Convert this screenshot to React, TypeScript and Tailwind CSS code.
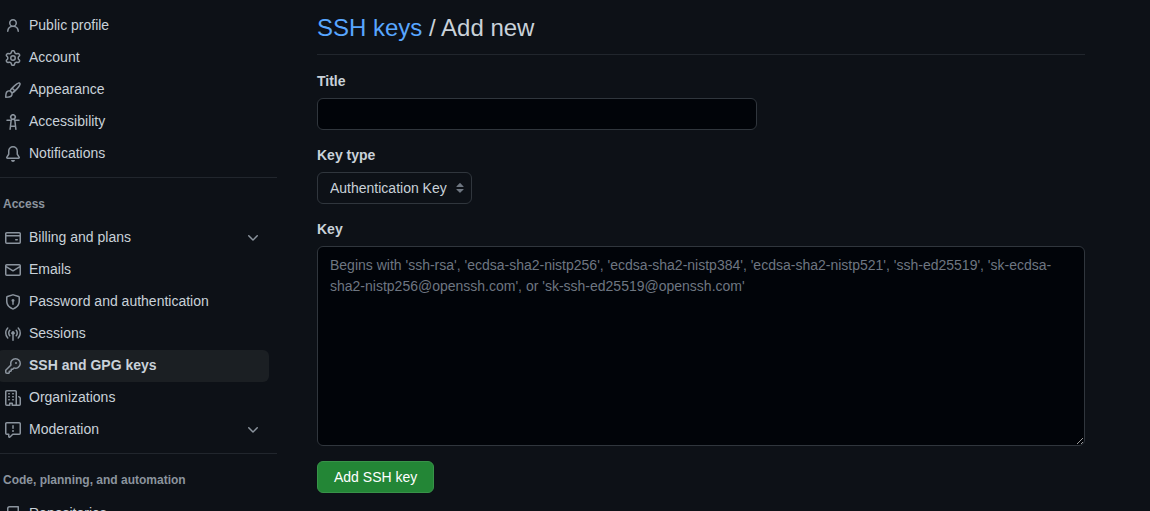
import type { ReactNode } from "react";

const icons = {
    person: "M10.561 8.073a6.005 6.005 0 0 1 3.432 5.142.75.75 0 1 1-1.498.07 4.5 4.5 0 0 0-8.99 0 .75.75 0 0 1-1.498-.07 6.004 6.004 0 0 1 3.431-5.142 3.999 3.999 0 1 1 5.123 0ZM10.5 5a2.5 2.5 0 1 0-5 0 2.5 2.5 0 0 0 5 0Z",
    gear: "M8 0a8.2 8.2 0 0 1 .701.031C9.444.095 9.99.645 10.16 1.29l.288 1.107c.018.066.079.158.212.224.231.114.454.243.668.386.123.082.233.09.299.071l1.103-.303c.644-.176 1.392.021 1.82.63.27.385.506.792.704 1.218.315.675.111 1.422-.364 1.891l-.814.806c-.049.048-.098.147-.088.294.016.257.016.515 0 .772-.01.147.038.246.088.294l.814.806c.475.469.679 1.216.364 1.891a7.977 7.977 0 0 1-.704 1.217c-.428.61-1.176.807-1.82.63l-1.102-.302c-.067-.019-.177-.011-.3.071a5.909 5.909 0 0 1-.668.386c-.133.066-.194.158-.211.224l-.29 1.106c-.168.646-.715 1.196-1.458 1.26a8.006 8.006 0 0 1-1.402 0c-.743-.064-1.289-.614-1.458-1.26l-.289-1.106c-.018-.066-.079-.158-.212-.224a5.738 5.738 0 0 1-.668-.386c-.123-.082-.233-.09-.299-.071l-1.103.303c-.644.176-1.392-.021-1.82-.63a8.12 8.12 0 0 1-.704-1.218c-.315-.675-.111-1.422.363-1.891l.815-.806c.05-.048.098-.147.088-.294a6.214 6.214 0 0 1 0-.772c.01-.147-.038-.246-.088-.294l-.815-.806C.635 6.045.431 5.298.746 4.623a7.92 7.92 0 0 1 .704-1.217c.428-.61 1.176-.807 1.82-.63l1.102.302c.067.019.177.011.3-.071.214-.143.437-.272.668-.386.133-.066.194-.158.211-.224l.29-1.106C6.009.645 6.556.095 7.299.03 7.53.01 7.764 0 8 0Zm-.571 1.525c-.036.003-.108.036-.137.146l-.289 1.105c-.147.561-.549.967-.998 1.189-.173.086-.34.183-.5.29-.417.278-.97.423-1.529.27l-1.103-.303c-.109-.03-.175.016-.195.045-.22.312-.412.644-.573.99-.014.031-.021.11.059.19l.815.806c.411.406.562.957.53 1.456a4.709 4.709 0 0 0 0 .582c.032.499-.119 1.05-.53 1.456l-.815.806c-.081.08-.073.159-.059.19.162.346.353.677.573.989.02.03.085.076.195.046l1.102-.303c.56-.153 1.113-.008 1.53.27.161.107.328.204.501.29.447.222.85.629.997 1.189l.289 1.105c.029.109.101.143.137.146a6.6 6.6 0 0 0 1.142 0c.036-.003.108-.036.137-.146l.289-1.105c.147-.561.549-.967.998-1.189.173-.086.34-.183.5-.29.417-.278.97-.423 1.529-.27l1.103.303c.109.029.175-.016.195-.045.22-.313.411-.644.573-.99.014-.031.021-.11-.059-.19l-.815-.806c-.411-.406-.562-.957-.53-1.456a4.709 4.709 0 0 0 0-.582c-.032-.499.119-1.05.53-1.456l.815-.806c.081-.08.073-.159.059-.19a6.464 6.464 0 0 0-.573-.989c-.02-.03-.085-.076-.195-.046l-1.102.303c-.56.153-1.113.008-1.53-.27a4.44 4.44 0 0 0-.501-.29c-.447-.222-.85-.629-.997-1.189l-.289-1.105c-.029-.11-.101-.143-.137-.146a6.6 6.6 0 0 0-1.142 0ZM11 8a3 3 0 1 1-6 0 3 3 0 0 1 6 0ZM9.5 8a1.5 1.5 0 1 0-3.001.001A1.5 1.5 0 0 0 9.5 8Z",
    paintbrush: "M11.134 1.535c.7-.509 1.416-.942 2.076-1.155.649-.21 1.463-.267 2.069.34.603.601.568 1.411.368 2.07-.202.668-.624 1.39-1.125 2.096-1.011 1.424-2.496 2.987-3.775 4.249-1.098 1.084-2.132 1.839-3.04 2.3a3.744 3.744 0 0 1-1.055 3.217c-.431.431-1.065.691-1.657.861-.614.177-1.294.287-1.914.357A21.151 21.151 0 0 1 .797 16H.743l.007-.75H.749L.742 16a.75.75 0 0 1-.743-.742l.743-.008-.742.007v-.054a21.25 21.25 0 0 1 .13-2.284c.067-.647.187-1.287.358-1.914.17-.591.43-1.226.86-1.657a3.746 3.746 0 0 1 3.227-1.054c.466-.893 1.225-1.907 2.314-2.982 1.271-1.255 2.833-2.75 4.246-3.777ZM1.62 13.089c-.051.464-.086.929-.104 1.395.466-.018.932-.053 1.396-.104a10.511 10.511 0 0 0 1.668-.309c.526-.151.856-.325 1.011-.48a2.25 2.25 0 1 0-3.182-3.182c-.155.155-.329.485-.48 1.01a10.515 10.515 0 0 0-.309 1.67Zm10.396-10.34c-1.224.89-2.605 2.189-3.822 3.384l1.718 1.718c1.21-1.205 2.51-2.597 3.387-3.833.47-.662.78-1.227.912-1.662.134-.444.032-.551.009-.575h-.001V1.78c-.014-.014-.113-.113-.548.027-.432.14-.995.462-1.655.942Zm-4.832 7.266-.001.001a9.859 9.859 0 0 0 1.63-1.142L7.155 7.216a9.7 9.7 0 0 0-1.161 1.607c.482.302.889.71 1.19 1.192Z",
    accessibility: "M9.923 5.302c.063.063.122.129.178.198H14A.75.75 0 0 1 14 7h-3.3l.578 5.163.362 2.997a.75.75 0 0 1-1.49.18L9.868 13H6.132l-.282 2.34a.75.75 0 0 1-1.49-.18l.362-2.997L5.3 7H2a.75.75 0 0 1 0-1.5h3.9a2.54 2.54 0 0 1 .176-.198 3 3 0 1 1 3.847 0ZM9.2 7.073h-.001a1.206 1.206 0 0 0-2.398 0L6.305 11.5h3.39ZM9.5 3a1.5 1.5 0 1 0-3.001.001A1.5 1.5 0 0 0 9.5 3Z",
    bell: "M8 16a2 2 0 0 0 1.985-1.75c.017-.137-.097-.25-.235-.25h-3.5c-.138 0-.252.113-.235.25A2 2 0 0 0 8 16ZM3 5a5 5 0 0 1 10 0v2.947c0 .05.015.098.042.139l1.703 2.555A1.519 1.519 0 0 1 13.482 13H2.518a1.516 1.516 0 0 1-1.263-2.36l1.703-2.554A.255.255 0 0 0 3 7.947Zm5-3.5A3.5 3.5 0 0 0 4.5 5v2.947c0 .346-.102.683-.294.97l-1.703 2.556a.017.017 0 0 0-.003.01l.001.006c0 .002.002.004.004.006l.006.004.007.001h10.964l.007-.001.006-.004.004-.006.001-.007a.017.017 0 0 0-.003-.01l-1.703-2.554a1.745 1.745 0 0 1-.294-.97V5A3.5 3.5 0 0 0 8 1.5Z",
    creditCard: "M10.75 9a.75.75 0 0 0 0 1.5h1.5a.75.75 0 0 0 0-1.5h-1.5ZM0 3.75C0 2.784.784 2 1.75 2h12.5c.966 0 1.75.784 1.75 1.75v8.5A1.75 1.75 0 0 1 14.25 14H1.75A1.75 1.75 0 0 1 0 12.25ZM14.5 6.5h-13v5.75c0 .138.112.25.25.25h12.5a.25.25 0 0 0 .25-.25Zm0-2.75a.25.25 0 0 0-.25-.25H1.75a.25.25 0 0 0-.25.25V5h13Z",
    mail: "M1.75 2h12.5c.966 0 1.75.784 1.75 1.75v8.5A1.75 1.75 0 0 1 14.25 14H1.75A1.75 1.75 0 0 1 0 12.25v-8.5C0 2.784.784 2 1.75 2ZM1.5 12.251c0 .138.112.25.25.25h12.5a.25.25 0 0 0 .25-.25V5.809L8.38 9.397a.75.75 0 0 1-.76 0L1.5 5.809v6.442Zm13-8.181v-.32a.25.25 0 0 0-.25-.25H1.75a.25.25 0 0 0-.25.25v.32L8 7.88Z",
    shieldLock: "m8.533.133 5.25 1.68A1.75 1.75 0 0 1 15 3.48V7c0 1.566-.32 3.182-1.303 4.682-.983 1.498-2.585 2.813-5.032 3.855a1.697 1.697 0 0 1-1.33 0c-2.447-1.042-4.049-2.357-5.032-3.855C1.32 10.182 1 8.566 1 7V3.48a1.75 1.75 0 0 1 1.217-1.667l5.25-1.68a1.748 1.748 0 0 1 1.066 0Zm-.61 1.429.001.001-5.25 1.68a.251.251 0 0 0-.174.237V7c0 1.36.275 2.666 1.057 3.859.784 1.194 2.121 2.342 4.366 3.298a.196.196 0 0 0 .154 0c2.245-.957 3.582-2.103 4.366-3.297C13.225 9.666 13.5 8.358 13.5 7V3.48a.25.25 0 0 0-.174-.238l-5.25-1.68a.25.25 0 0 0-.153 0ZM9.5 6.5c0 .536-.286 1.032-.75 1.3v2.45a.75.75 0 0 1-1.5 0V7.8A1.5 1.5 0 1 1 9.5 6.5Z",
    broadcast: "M8.75 8.582v5.668a.75.75 0 0 1-1.5 0V8.582a1.75 1.75 0 1 1 1.5 0Zm3.983-7.125a.75.75 0 0 1 1.06.026A7.976 7.976 0 0 1 16 7c0 2.139-.84 4.083-2.207 5.517a.75.75 0 1 1-1.086-1.034A6.474 6.474 0 0 0 14.5 7a6.474 6.474 0 0 0-1.793-4.483.75.75 0 0 1 .026-1.06Zm-9.466 0c.3.286.312.76.026 1.06A6.474 6.474 0 0 0 1.5 7a6.47 6.47 0 0 0 1.793 4.483.75.75 0 0 1-1.086 1.034A7.973 7.973 0 0 1 0 7c0-2.139.84-4.083 2.207-5.517a.75.75 0 0 1 1.06-.026Zm8.556 2.321A4.988 4.988 0 0 1 13 7a4.988 4.988 0 0 1-1.177 3.222.75.75 0 1 1-1.146-.967A3.487 3.487 0 0 0 11.5 7c0-.86-.309-1.645-.823-2.255a.75.75 0 0 1 1.146-.967Zm-6.492.958A3.48 3.48 0 0 0 4.5 7a3.48 3.48 0 0 0 .823 2.255.75.75 0 0 1-1.146.967A4.981 4.981 0 0 1 3 7a4.982 4.982 0 0 1 1.188-3.236.75.75 0 1 1 1.143.972Z",
    key: "M10.5 0a5.499 5.499 0 1 1-1.288 10.848l-.932.932a.749.749 0 0 1-.53.22H7v.75a.749.749 0 0 1-.22.53l-.5.5a.749.749 0 0 1-.53.22H5v.75a.749.749 0 0 1-.22.53l-.5.5a.749.749 0 0 1-.53.22h-2A1.75 1.75 0 0 1 0 14.25v-2c0-.199.079-.389.22-.53l4.932-4.932A5.5 5.5 0 0 1 10.5 0Zm-4 5.5c-.001.431.069.86.205 1.269a.75.75 0 0 1-.181.768L1.5 12.56v1.69c0 .138.112.25.25.25h1.69l.06-.06v-1.19a.75.75 0 0 1 .75-.75h1.19l.06-.06v-1.19a.75.75 0 0 1 .75-.75h1.19l1.023-1.025a.75.75 0 0 1 .768-.18A4 4 0 1 0 6.5 5.5ZM11 6a1 1 0 1 1 0-2 1 1 0 0 1 0 2Z",
    organization: "M1.75 16A1.75 1.75 0 0 1 0 14.25V1.75C0 .784.784 0 1.75 0h8.5C11.216 0 12 .784 12 1.75v12.5c0 .085-.006.168-.018.25h2.268a.25.25 0 0 0 .25-.25V8.285a.25.25 0 0 0-.111-.208l-1.055-.703a.749.749 0 1 1 .832-1.248l1.055.703c.487.325.779.871.779 1.456v5.965A1.75 1.75 0 0 1 14.25 16h-3.5a.766.766 0 0 1-.197-.026c-.099.017-.2.026-.303.026h-3a.75.75 0 0 1-.75-.75V14h-1v1.25a.75.75 0 0 1-.75.75Zm-.25-1.75c0 .138.112.25.25.25H4v-1.25a.75.75 0 0 1 .75-.75h2.5a.75.75 0 0 1 .75.75v1.25h2.25a.25.25 0 0 0 .25-.25V1.75a.25.25 0 0 0-.25-.25h-8.5a.25.25 0 0 0-.25.25ZM3.75 6h.5a.75.75 0 0 1 0 1.5h-.5a.75.75 0 0 1 0-1.5ZM3 3.75A.75.75 0 0 1 3.75 3h.5a.75.75 0 0 1 0 1.5h-.5A.75.75 0 0 1 3 3.75Zm4 3A.75.75 0 0 1 7.75 6h.5a.75.75 0 0 1 0 1.5h-.5A.75.75 0 0 1 7 6.75ZM7.75 3h.5a.75.75 0 0 1 0 1.5h-.5a.75.75 0 0 1 0-1.5ZM3 9.75A.75.75 0 0 1 3.75 9h.5a.75.75 0 0 1 0 1.5h-.5A.75.75 0 0 1 3 9.75ZM7.75 9h.5a.75.75 0 0 1 0 1.5h-.5a.75.75 0 0 1 0-1.5Z",
    report: "M0 1.75C0 .784.784 0 1.75 0h12.5C15.216 0 16 .784 16 1.75v9.5A1.75 1.75 0 0 1 14.25 13H8.06l-2.573 2.573A1.458 1.458 0 0 1 3 14.543V13H1.75A1.75 1.75 0 0 1 0 11.25Zm1.75-.25a.25.25 0 0 0-.25.25v9.5c0 .138.112.25.25.25h2a.75.75 0 0 1 .75.75v2.19l2.72-2.72a.749.749 0 0 1 .53-.22h6.5a.25.25 0 0 0 .25-.25v-9.5a.25.25 0 0 0-.25-.25Zm7 2.25v2.5a.75.75 0 0 1-1.5 0v-2.5a.75.75 0 0 1 1.5 0ZM9 9a1 1 0 1 1-2 0 1 1 0 0 1 2 0Z",
    repo: "M2 2.5A2.5 2.5 0 0 1 4.5 0h8.75a.75.75 0 0 1 .75.75v12.5a.75.75 0 0 1-.75.75h-2.5a.75.75 0 0 1 0-1.5h1.75v-2h-8a1 1 0 0 0-.714 1.7.75.75 0 1 1-1.072 1.05A2.495 2.495 0 0 1 2 11.5Zm10.5-1h-8a1 1 0 0 0-1 1v6.708A2.486 2.486 0 0 1 4.5 9h8ZM5 12.25a.25.25 0 0 1 .25-.25h3.5a.25.25 0 0 1 .25.25v3.25a.25.25 0 0 1-.4.2l-1.45-1.087a.249.249 0 0 0-.3 0L5.4 15.7a.25.25 0 0 1-.4-.2Z",
    chevronDown: "M12.78 5.22a.749.749 0 0 1 0 1.06l-4.25 4.25a.749.749 0 0 1-1.06 0L3.22 6.28a.749.749 0 1 1 1.06-1.06L8 8.939l3.72-3.719a.749.749 0 0 1 1.06 0Z",
    updown: "M4.427 9.427l3.396 3.396a.251.251 0 0 0 .354 0l3.396-3.396A.25.25 0 0 0 11.396 9H4.604a.25.25 0 0 0-.177.427zM4.423 6.47L7.82 3.072a.25.25 0 0 1 .354 0L11.57 6.47a.25.25 0 0 1-.177.427H4.6a.25.25 0 0 1-.177-.427z",
};

type IconName = keyof typeof icons;

const Icon = ({ name, className = "" }: { name: IconName; className?: string }) => (
    <svg viewBox="0 0 16 16" aria-hidden="true" className={`size-4 shrink-0 fill-current ${className}`}>
        <path d={icons[name]} />
    </svg>
);

type NavItem = {
    label: string;
    icon: IconName;
    active?: boolean;
    expandable?: boolean;
};

const groups: { title?: string; items: NavItem[] }[] = [
    {
        items: [
            { label: "Public profile", icon: "person" },
            { label: "Account", icon: "gear" },
            { label: "Appearance", icon: "paintbrush" },
            { label: "Accessibility", icon: "accessibility" },
            { label: "Notifications", icon: "bell" },
        ],
    },
    {
        title: "Access",
        items: [
            { label: "Billing and plans", icon: "creditCard", expandable: true },
            { label: "Emails", icon: "mail" },
            { label: "Password and authentication", icon: "shieldLock" },
            { label: "Sessions", icon: "broadcast" },
            { label: "SSH and GPG keys", icon: "key", active: true },
            { label: "Organizations", icon: "organization" },
            { label: "Moderation", icon: "report", expandable: true },
        ],
    },
    {
        title: "Code, planning, and automation",
        items: [{ label: "Repositories", icon: "repo" }],
    },
];

const NavRow = ({ item }: { item: NavItem }) => {
    const rowClass = "flex h-8 w-full items-center gap-2 rounded-md px-2 text-left";
    const content = (
        <>
            <Icon name={item.icon} className="text-[#8b949e]" />
            <span className="flex-1 pb-0.5">{item.label}</span>
            {item.expandable && <Icon name="chevronDown" className="text-[#8b949e]" />}
        </>
    );

    if (item.expandable) {
        return (
            <button type="button" aria-expanded="false" className={rowClass}>
                {content}
            </button>
        );
    }

    return (
        <a
            href="#"
            aria-current={item.active ? "page" : undefined}
            className={`${rowClass} ${item.active ? "bg-[#1b1f23] font-bold" : ""}`}
        >
            {content}
        </a>
    );
};

const Sidebar = () => {
    return (
        <nav aria-label="Settings" className="-ml-[3px] w-[280px] shrink-0 pt-2.5">
            {groups.map((group, index) => (
                <div key={index} className={index > 0 ? "mt-[7px] border-t border-[#21262d]" : ""}>
                    {group.title && (
                        <h2 className="px-1.5 pt-4 pb-2 text-xs leading-5 font-bold text-[#8b949e]">{group.title}</h2>
                    )}
                    <ul className="pr-2">
                        {group.items.map((item) => (
                            <li key={item.label}>
                                <NavRow item={item} />
                            </li>
                        ))}
                    </ul>
                </div>
            ))}
        </nav>
    );
};

const Field = ({ id, label, children }: { id: string; label: string; children: ReactNode }) => (
    <div className="flex flex-col items-start gap-1.5">
        <label htmlFor={id} className="leading-[21px] font-bold">
            {label}
        </label>
        {children}
    </div>
);

const App = () => {
    return (
        <div className="flex h-screen overflow-hidden bg-[#0d1117] font-['Liberation_Sans',Arial,sans-serif] text-sm text-[#c9d1d9] scheme-dark">
            <Sidebar />
            <main className="mr-[65px] ml-10 min-w-0 flex-1 pt-2.5">
                <h1 className="border-b border-[#21262d] pb-2 text-2xl leading-9">
                    <a href="#" className="text-[#58a6ff]">SSH keys</a> / Add new
                </h1>
                <form className="flex flex-col items-start gap-[15px] pt-4">
                    <Field id="title" label="Title">
                        <input
                            id="title"
                            type="text"
                            className="h-8 w-[440px] max-w-full rounded-md border border-[#30363d] bg-[#010409] px-3"
                        />
                    </Field>
                    <Field id="key-type" label="Key type">
                        <div className="relative">
                            <select
                                id="key-type"
                                className="block h-8 appearance-none rounded-md border border-[#30363d] bg-[#0d1117] pr-6 pl-3"
                            >
                                <option>Authentication Key</option>
                                <option>Signing Key</option>
                            </select>
                            <Icon name="updown" className="pointer-events-none absolute top-2 right-1 text-[#6e7681]" />
                        </div>
                    </Field>
                    <div className="w-full">
                        <Field id="key" label="Key">
                            <textarea
                                id="key"
                                placeholder="Begins with 'ssh-rsa', 'ecdsa-sha2-nistp256', 'ecdsa-sha2-nistp384', 'ecdsa-sha2-nistp521', 'ssh-ed25519', 'sk-ecdsa-sha2-nistp256@openssh.com', or 'sk-ssh-ed25519@openssh.com'"
                                className="block h-[200px] w-full rounded-md border border-[#30363d] bg-[#010409] px-3 py-2 leading-[21px] placeholder:text-[#6e7681]"
                            />
                        </Field>
                    </div>
                    <button
                        type="button"
                        className="h-8 rounded-md border border-[#389349] bg-[#238636] px-4 text-white"
                    >
                        Add SSH key
                    </button>
                </form>
            </main>
        </div>
    );
};

export default App;
